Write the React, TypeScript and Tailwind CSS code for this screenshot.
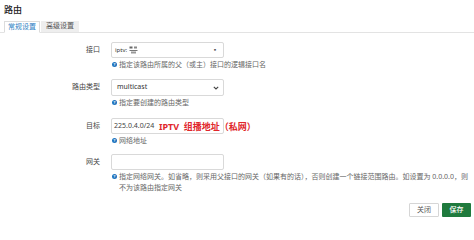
import React from "react";

const font = { fontFamily: '"Noto Sans", "Noto Sans CJK SC", sans-serif' };

function Help({ children }: { children: React.ReactNode }) {
  return (
    <div className="mt-[1px] flex items-start text-[7px] leading-[11px] text-[#666]">
      <span className="mt-[3px] mr-[2px] ml-[1px] flex h-[5px] w-[5px] shrink-0 items-center justify-center rounded-full bg-[#1e73be] text-[4px] font-bold leading-none text-white">
        ?
      </span>
      <span>{children}</span>
    </div>
  );
}

function Row({
  label,
  children,
  help,
  className,
}: {
  label: string;
  children: React.ReactNode;
  help: React.ReactNode;
  className?: string;
}) {
  return (
    <div className={"flex " + (className || "")}>
      <div className="w-[100px] shrink-0 text-right text-[7px] leading-[16px] text-[#444]">{label}</div>
      <div className="ml-[11px] flex-1">
        {children}
        {help}
      </div>
    </div>
  );
}

export default function App() {
  return (
    <div className="relative h-[220px] w-[474px] overflow-hidden bg-white text-[#333]" style={font}>
      <div className="pl-[4px] pt-[3px] text-[9px] font-medium leading-[13px] text-[#222]">路由</div>
      <div className="mt-[5px] flex border-b border-[#e3e3e3] pl-[4px]">
        <div className="mb-[-1px] flex h-[12px] items-center border border-b-white border-[#dcdcdc] bg-white px-[3px] text-[7px] text-[#2f7fc4]">
          常规设置
        </div>
        <div className="ml-[1px] flex h-[11px] items-center bg-[#eeeeee] px-[5px] text-[7px] text-[#555]">
          高级设置
        </div>
      </div>

      <Row
        className="mt-[9px]"
        label="接口"
        help={<Help>指定该路由所属的父（或主）接口的逻辑接口名</Help>}
      >
        <div className="flex h-[16px] w-[113px] items-center rounded-[2px] border border-[#d9d9d9] pl-[3px] pr-[5px] text-[6px] text-[#333]">
          <span>iptv:</span>
          <svg className="ml-[2px]" width="9" height="8" viewBox="0 0 9 8">
            <rect x="0.5" y="0.5" width="3" height="2" fill="#666" />
            <rect x="5" y="0.5" width="3" height="2" fill="#888" />
            <rect x="0.5" y="4" width="8" height="1" fill="#777" />
            <rect x="2" y="5.5" width="5" height="2" fill="#999" />
          </svg>
          <span className="ml-auto text-[6px] leading-none text-[#555]">▪</span>
        </div>
      </Row>

      <Row
        className="mt-[9px]"
        label="路由类型"
        help={<Help>指定要创建的路由类型</Help>}
      >
        <div className="flex h-[17px] w-[113px] items-center rounded-[2px] border border-[#d9d9d9] pl-[5px] pr-[4px] text-[7px] text-[#333]">
          <span>multicast</span>
          <svg className="ml-auto" width="6" height="4" viewBox="0 0 6 4">
            <path d="M0.8 0.8 L3 3 L5.2 0.8" fill="none" stroke="#444" strokeWidth="1.1" />
          </svg>
        </div>
      </Row>

      <Row className="mt-[10px]" label="目标" help={<Help>网络地址</Help>}>
        <div className="relative flex h-[16px] w-[113px] items-center rounded-[2px] border border-[#d9d9d9] pl-[2px] text-[7px] text-[#444]">
          <span>225.0.4.0/24</span>
          <span className="absolute left-[47px] top-[1px] whitespace-nowrap text-[9px] font-bold leading-[13px] text-[#e0262b]">
            IPTV&nbsp; 组播地址（私网）
          </span>
        </div>
      </Row>

      <Row
        className="mt-[8px]"
        label="网关"
        help={
          <Help>
            指定网络网关。如省略，则采用父接口的网关（如果有的话），否则创建一个链接范围路由。如设置为 0.0.0.0，则
            <br />
            不为该路由指定网关
          </Help>
        }
      >
        <div className="h-[16px] w-[113px] rounded-[2px] border border-[#d9d9d9]"></div>
      </Row>

      <div className="absolute bottom-[3px] right-[3px] flex gap-[3px]">
        <div className="flex h-[14px] w-[30px] items-center justify-center rounded-[1px] border border-[#d6d6d6] bg-white text-[7px] text-[#555]">
          关闭
        </div>
        <div className="flex h-[14px] w-[29px] items-center justify-center rounded-[1px] bg-[#1f7a3d] text-[7px] font-medium text-white">
          保存
        </div>
      </div>
    </div>
  );
}
